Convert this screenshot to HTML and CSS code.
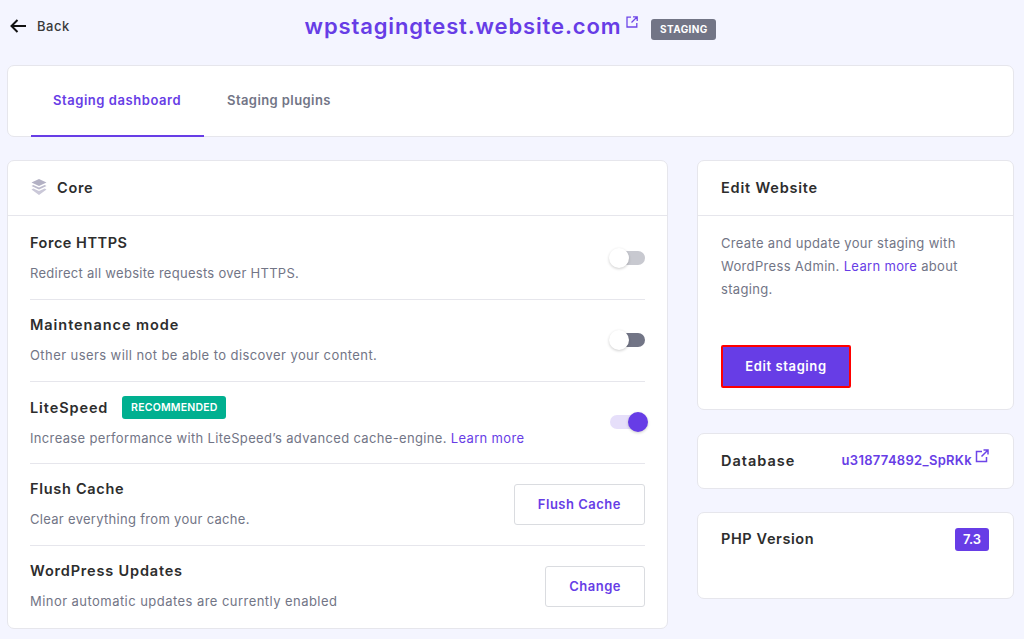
FILE: index.html
```html
<!DOCTYPE html>
<html lang="en">
<head>
<meta charset="utf-8">
<title>Staging</title>
<link rel="stylesheet" href="styles.css">
</head>
<body>
<header class="top">
  <a class="back">
    <svg class="back-icon" viewBox="0 0 16 14" width="16" height="14"><path d="M7.500 1 1.500 7l6 6M1.500 7H16" fill="none" stroke="#111" stroke-width="2"/></svg>
    <span>Back</span>
  </a>
  <div class="title-wrap">
    <span class="site">wpstagingtest.website.com</span>
    <svg class="ext ext-title" viewBox="0 0 12 12" width="12" height="12"><path d="M5 1.200H1v9.800h9.800V7M7 .8h4.200V5M11 1 5.500 6.500" fill="none" stroke="#6d45e8" stroke-width="1.300"/></svg>
    <span class="tag">STAGING</span>
  </div>
</header>

<nav class="tabs">
  <a class="tab active">Staging dashboard</a>
  <a class="tab">Staging plugins</a>
</nav>

<main class="cols">
  <section class="card core">
    <div class="core-head">
      <svg class="layers" viewBox="0 0 16 16" width="16" height="16"><path d="M8 0 15.500 3.500 8 7 .5 3.500z" fill="#b3b1c4"/><path d="M2.300 5.900 8 8.500l5.700-2.600 1.800 1.100L8 10.500.5 7z" fill="#bdbbcd"/><path d="M2.300 9.400 8 12l5.700-2.600 1.800 1.100L8 16 .5 10.500z" fill="#cac8d8"/></svg>
      <h2>Core</h2>
    </div>
    <div class="rows">
      <div class="row row-https">
        <div class="row-text"><h3>Force HTTPS</h3><p>Redirect all website requests over HTTPS.</p></div>
        <span class="toggle off-light"><i></i></span>
      </div>
      <div class="row row-maint">
        <div class="row-text"><h3>Maintenance mode</h3><p>Other users will not be able to discover your content.</p></div>
        <span class="toggle off-dark"><i></i></span>
      </div>
      <div class="row row-lite">
        <div class="row-text"><h3>LiteSpeed <span class="badge">RECOMMENDED</span></h3><p>Increase performance with LiteSpeed’s advanced cache-engine. <a class="link">Learn more</a></p></div>
        <span class="toggle on"><i></i></span>
      </div>
      <div class="row row-flush">
        <div class="row-text"><h3>Flush Cache</h3><p>Clear everything from your cache.</p></div>
        <button class="btn-outline">Flush Cache</button>
      </div>
      <div class="row row-wp">
        <div class="row-text"><h3>WordPress Updates</h3><p>Minor automatic updates are currently enabled</p></div>
        <button class="btn-outline">Change</button>
      </div>
    </div>
  </section>

  <aside class="side">
    <section class="card edit">
      <h2 class="edit-head">Edit Website</h2>
      <div class="edit-body">
        <p>Create and update your staging with WordPress Admin. <a class="link">Learn more</a> about staging.</p>
        <button class="btn-primary">Edit staging</button>
      </div>
    </section>
    <section class="card db">
      <h2>Database</h2>
      <span class="db-link">u318774892_SpRKk<svg class="ext" viewBox="0 0 14 14" width="14" height="14"><path d="M7 2.500H1.500v10h10V8M8.500 1H13v4.500M13 1 6.500 7.500" fill="none" stroke="#6d45e8" stroke-width="1.500"/></svg></span>
    </section>
    <section class="card php">
      <h2>PHP Version</h2>
      <span class="ver">7.3</span>
    </section>
  </aside>
</main>
</body>
</html>
```

FILE: styles.css
```css
* { box-sizing: border-box; }
html, body { margin: 0; padding: 0; }
body {
  width: 1024px;
  height: 639px;
  overflow: hidden;
  background: #f4f5ff;
  font-family: Inter, "Liberation Sans", sans-serif;
  color: #2f1c6a;
}
h2, h3, p { margin: 0; }
.top {
  height: 65px;
  position: relative;
  display: flex;
  align-items: flex-start;
  justify-content: center;
}
.back {
  position: absolute;
  left: 10px;
  top: 19px;
  display: flex;
  align-items: center;
  gap: 11px;
  font-size: 13px;
  font-weight: 500;
  letter-spacing: 0.5px;
  line-height: 14px;
  color: #3a3a3a;
}
.back-icon { display: block; }
.title-wrap {
  display: flex;
  align-items: flex-start;
  margin-left: -3px;
  padding-top: 14px;
}
.site {
  font-size: 22px;
  font-weight: 600;
  line-height: 25px;
  color: #673de6;
  letter-spacing: 0.86px;
}
.ext-title { margin: 2px 0 0 5px; }
.tag {
  margin: 5px 0 0 13px;
  width: 65px;
  height: 21px;
  background: #727586;
  border-radius: 3px;
  color: #fff;
  font-size: 10px;
  font-weight: 700;
  letter-spacing: 0.4px;
  line-height: 21px;
  text-align: center;
}
.card {
  background: #fff;
  border: 1px solid #e6e6ec;
  border-radius: 7px;
}
.tabs {
  margin-left: 7px;
  width: 1007px;
  height: 72px;
  background: #fff;
  border: 1px solid #e6e6ec;
  border-radius: 7px;
  display: flex;
  padding-left: 23px;
}
.tab {
  height: 71px;
  padding: 0 23px;
  font-size: 13px;
  font-weight: 600;
  letter-spacing: 0.42px;
  line-height: 69px;
  color: #727586;
  white-space: nowrap;
}
.tab.active {
  width: 173px;
  padding-left: 22px;
  letter-spacing: 0.55px;
  color: #673de6;
  border-bottom: 2px solid #673de6;
}
.cols {
  display: flex;
  align-items: flex-start;
  gap: 29px;
  margin: 23px 0 0 7px;
}
.core {
  width: 661px;
  height: 469px;
}
.core-head {
  height: 55px;
  padding: 0 0 2px 23px;
  display: flex;
  align-items: center;
  gap: 10px;
  border-bottom: 1px solid #e6e6ec;
}
.layers { display: block; }
h2 {
  font-size: 14.500px;
  font-weight: 600;
  letter-spacing: 0.7px;
  color: #2d2d2d;
}
.rows { padding: 0 22px; }
.row {
  height: 82px;
  display: flex;
  align-items: flex-start;
  justify-content: space-between;
  border-bottom: 1px solid #e6e6ec;
}
.row:first-child {
  height: 84px;
  padding-top: 2px;
}
.row:last-child { border-bottom: 0; }
.row-text { padding-top: 14px; }
h3 {
  font-size: 14.500px;
  font-weight: 600;
  letter-spacing: 0.7px;
  line-height: 22px;
  color: #2d2d2d;
  display: flex;
  align-items: center;
}
.row-text p {
  margin-top: 9px;
  font-size: 13px;
  letter-spacing: 0.36px;
  line-height: 20px;
  color: #727586;
}
.row-https h3 { letter-spacing: 0.52px; }
.row-https p { letter-spacing: 0.28px; }
.row-maint h3 { letter-spacing: 0.95px; }
.row-maint p { letter-spacing: 0.42px; }
.row-lite h3 { letter-spacing: 0.9px; }
.row-lite p { letter-spacing: 0.34px; }
.row-flush p { letter-spacing: 0.3px; }
.row-wp h3 { letter-spacing: 0.82px; }
.row-wp p { letter-spacing: 0.45px; }
.link { color: #673de6; }
.badge {
  margin-left: 14px;
  width: 104px;
  height: 23px;
  background: #00b090;
  border-radius: 3px;
  color: #fff;
  font-size: 10.500px;
  font-weight: 600;
  letter-spacing: 0.2px;
  line-height: 23px;
  text-align: center;
}
.toggle {
  width: 35px;
  height: 14px;
  margin-top: 33px;
  border-radius: 7px;
  position: relative;
}
.toggle i {
  position: absolute;
  top: -3px;
  width: 20px;
  height: 20px;
  border-radius: 50%;
  background: #fff;
  box-shadow: 0 1px 3px rgba(0, 0, 0, 0.2);
}
.off-light { background: #c8c9d0; }
.off-dark { background: #727586; }
.off-light i, .off-dark i { left: -1px; }
.on { background: #e6dffa; }
.on i { right: -3px; background: #673de6; }
.btn-outline {
  height: 41px;
  margin-top: 20px;
  padding: 0 23px 2px;
  background: #fff;
  border: 1px solid #dadce0;
  border-radius: 3px;
  font: 600 13px Inter, "Liberation Sans", sans-serif;
  letter-spacing: 0.5px;
  color: #673de6;
}
.side {
  width: 317px;
  display: flex;
  flex-direction: column;
  gap: 23px;
}
.edit { height: 250px; }
.edit-head {
  height: 55px;
  padding-left: 23px;
  line-height: 54px;
  letter-spacing: 0.8px;
  border-bottom: 1px solid #e6e6ec;
}
.edit-body { padding: 16px 23px 0; }
.edit-body p {
  font-size: 13px;
  letter-spacing: 0.33px;
  line-height: 23px;
  color: #727586;
}
.btn-primary {
  display: block;
  margin-top: 44px;
  width: 130px;
  height: 43px;
  padding-bottom: 2px;
  background: #673de6;
  border: 2px solid #f00;
  border-radius: 2px;
  color: #fff;
  font: 600 13px Inter, "Liberation Sans", sans-serif;
  letter-spacing: 0.6px;
}
.db {
  height: 56px;
  padding: 0 24px 2px 23px;
  display: flex;
  align-items: center;
  justify-content: space-between;
}
.db h2 { letter-spacing: 1px; }
.db-link {
  display: flex;
  align-items: flex-start;
  gap: 3px;
  font-size: 13px;
  font-weight: 600;
  letter-spacing: 0.3px;
  color: #673de6;
}
.db-link .ext { margin-top: -3px; }
.php {
  height: 87px;
  padding: 15px 24px 0 23px;
  display: flex;
  align-items: flex-start;
  justify-content: space-between;
}
.php h2 { line-height: 22px; letter-spacing: 0.6px; }
.ver {
  width: 34px;
  height: 23px;
  background: #673de6;
  border-radius: 3px;
  color: #fff;
  font-size: 13px;
  font-weight: 600;
  line-height: 23px;
  text-align: center;
}
```
